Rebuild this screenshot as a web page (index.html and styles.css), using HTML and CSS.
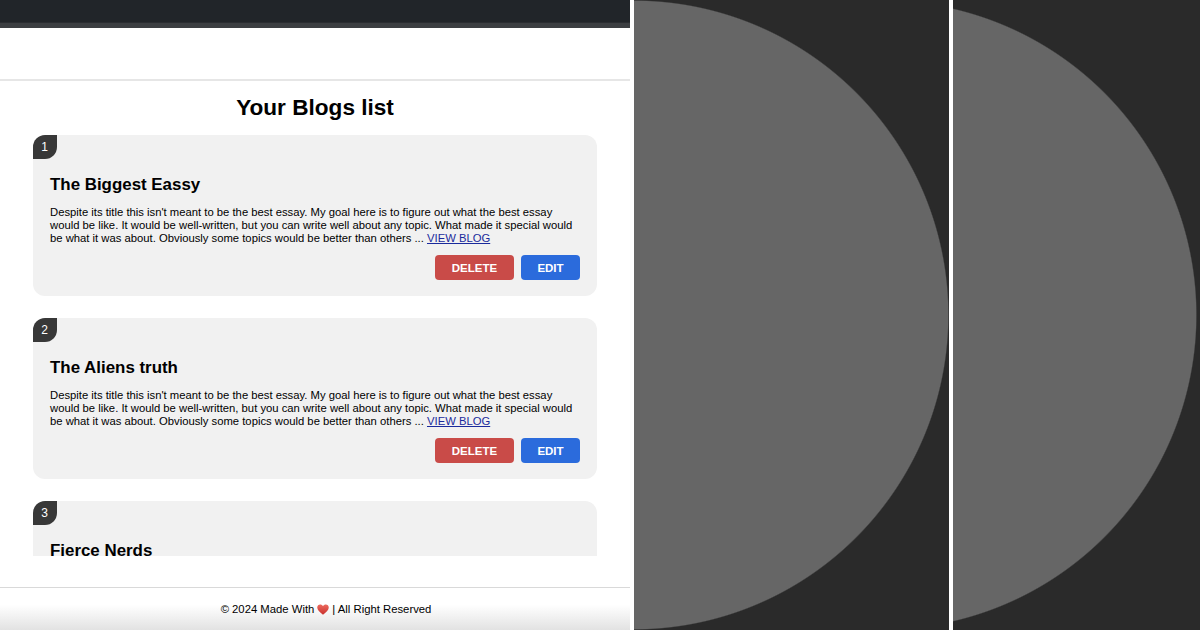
FILE: index.html
```html
<!DOCTYPE html>
<html lang="en">
<head>
<meta charset="utf-8">
<title>Your Blogs list</title>
<link rel="stylesheet" href="styles.css">
</head>
<body>
<div class="shot">
  <div class="app">
    <div class="topbar"></div>
    <div class="subnav"></div>
    <main class="main">
      <h1 class="heading">Your Blogs list</h1>
      <div class="list">
        <article class="card">
          <span class="badge">1</span>
          <h2 class="card-title">The Biggest Eassy</h2>
          <p class="card-text">Despite its title this isn't meant to be the best essay. My goal here is to figure out what the best essay would be like. It would be well-written, but you can write well about any topic. What made it special would be what it was about. Obviously some topics would be better than others ... <a class="link" href="#">VIEW BLOG</a></p>
          <div class="actions"><button class="btn btn-delete">DELETE</button><button class="btn btn-edit">EDIT</button></div>
        </article>
        <article class="card">
          <span class="badge">2</span>
          <h2 class="card-title">The Aliens truth</h2>
          <p class="card-text">Despite its title this isn't meant to be the best essay. My goal here is to figure out what the best essay would be like. It would be well-written, but you can write well about any topic. What made it special would be what it was about. Obviously some topics would be better than others ... <a class="link" href="#">VIEW BLOG</a></p>
          <div class="actions"><button class="btn btn-delete">DELETE</button><button class="btn btn-edit">EDIT</button></div>
        </article>
        <article class="card">
          <span class="badge">3</span>
          <h2 class="card-title">Fierce Nerds</h2>
        </article>
      </div>
    </main>
    <footer class="footer"><span>© 2024 Made With</span><svg class="heart" viewBox="0 0 24 22" aria-hidden="true"><defs><linearGradient id="heartFill" x1="0" y1="0" x2="0" y2="1"><stop offset="0" stop-color="#ec6a5e"/><stop offset="1" stop-color="#c9302c"/></linearGradient></defs><path fill="url(#heartFill)" d="M12 21.500C5 15.500 .5 11.500 .5 6.800 .5 3.200 3.200 .8 6.300 .8c2.300 0 4.500 1.200 5.700 3.300C13.200 2 15.400 .8 17.700 .8c3.100 0 5.800 2.400 5.800 6 0 4.700-4.500 8.700-11.500 14.700z"/></svg><span>| All Right Reserved</span></footer>
  </div>
  <div class="panel panel-a"></div>
  <div class="panel panel-b"></div>
</div>
</body>
</html>
```
FILE: styles.css
```css
* { box-sizing: border-box; }
html, body { margin: 0; padding: 0; background: #fff; }
.shot { display: flex; gap: 4px; width: 1200px; height: 630px; overflow: hidden; font-family: "Liberation Sans", Arial, sans-serif; color: #000; }
.app { display: flex; flex-direction: column; width: 630px; height: 630px; flex: none; }
.topbar { height: 28px; flex: none; background: #212529; border-bottom: 5px solid #3c3f42; box-shadow: inset 0 -1px 0 #2a2d31; }
.subnav { height: 53px; flex: none; background: #fff; border-bottom: 2px solid #e6e6e6; }
.main { height: 475px; flex: none; overflow: hidden; padding: 0 33px; margin-bottom: 31px; }
.heading { margin: 12px 0 12px; font-size: 22.6px; line-height: 30px; font-weight: 700; text-align: center; }
.list { display: flex; flex-direction: column; gap: 22px; }
.card { flex: none; height: 161px; padding: 39px 17px 0; background: #f1f1f1; border-radius: 12px; position: relative; }
.badge { position: absolute; left: 0; top: 0; width: 24px; height: 24px; padding-right: 1px; display: flex; align-items: center; justify-content: center; background: #383838; color: #fff; font-size: 12px; border-radius: 12px 0 12px 0; }
.card-title { margin: 0 0 10px; font-size: 16.9px; line-height: 22px; font-weight: 700; }
.card-text { margin: 0; font-size: 11.28px; line-height: 13px; }
.link { color: #1a2a9c; }
.actions { display: flex; justify-content: flex-end; gap: 7px; margin-top: 10px; }
.btn { height: 25px; border: 0; border-radius: 4px; color: #fff; font: 700 11.5px "Liberation Sans", Arial, sans-serif; padding: 0; }
.btn-delete { width: 79px; background: #c94b48; }
.btn-edit { width: 59px; background: #2b6bdc; }
.footer { height: 43px; flex: none; display: flex; align-items: center; justify-content: center; gap: 3px; padding-left: 22px; border-top: 1px solid #d9d9d9; font-size: 11.3px; background: linear-gradient(#fff 40%, #e2e2e2); }
.heart { width: 12px; height: 11px; }
.panel { height: 630px; background: #2a2a2a; }
.panel-a { flex: none; width: 315px; background: radial-gradient(circle 315px at 0 50%, #666 99.6%, #2a2a2a 100%); }
.panel-b { flex: none; width: 247px; background: radial-gradient(circle 315px at -71px 50%, #666 99.6%, #2a2a2a 100%); }
```
